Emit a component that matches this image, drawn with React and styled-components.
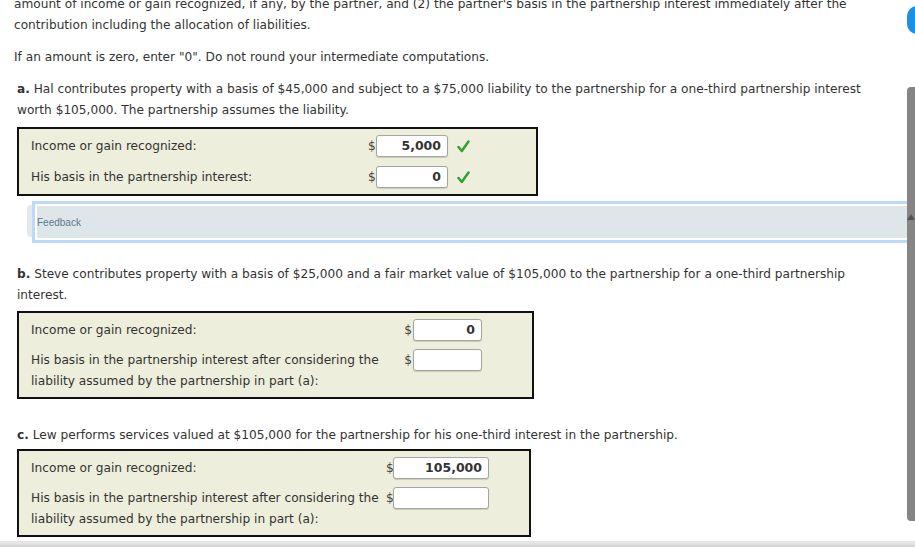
import styled, { createGlobalStyle } from "styled-components";

const GlobalStyle = createGlobalStyle`
  html, body {
    margin: 0;
    padding: 0;
    background: #fff;
    overflow: hidden;
  }
  body {
    font-family: Verdana, "DejaVu Sans", sans-serif;
    font-size: 12.15px;
    color: #333;
  }
`;

const Page = styled.div`
  position: relative;
  width: 915px;
  height: 547px;
  overflow: hidden;
`;

const Content = styled.div`
  padding: 0 20px 0 14px;
  margin-top: -6px;
`;

const Para = styled.p`
  margin: 0 0 11px;
  line-height: 21px;
`;

const Part = styled.div`
  padding-left: 3px;
  margin-top: ${(p) => p.$top || 0}px;
`;

const PartText = styled.p`
  margin: 0;
  line-height: 21px;
  b {
    font-weight: bold;
  }
`;

const AnswerBox = styled.div`
  width: ${(p) => p.$width}px;
  box-sizing: border-box;
  margin-top: ${(p) => p.$mt ?? 6}px;
  padding: 6px 0 ${(p) => p.$bottom || 6}px 12px;
  background: #edeedb;
  border: 2px solid #111;
  display: grid;
  grid-template-columns: ${(p) => p.$cols};
  row-gap: ${(p) => p.$gap || 8}px;
  align-items: start;
`;

const Label = styled.div`
  line-height: 21px;
  padding-top: 1px;
  color: #333;
`;

const Dollar = styled.div`
  line-height: 22px;
  text-align: right;
  color: #444;
  padding-right: 1px;
`;

const Field = styled.div`
  height: 22px;
  box-sizing: border-box;
  background: #fff;
  border: 1px solid #a4a4a4;
  border-radius: 3px;
  box-shadow: 0 1px 1px rgba(0, 0, 0, 0.15);
  text-align: right;
  padding-right: 6px;
  font-weight: bold;
  font-size: 12.5px;
  line-height: 20px;
  color: #333;
`;

const Check = styled.div`
  display: flex;
  align-items: center;
  height: 22px;
  padding-left: 9px;
`;

const FeedbackWrap = styled.div`
  position: relative;
  margin: 5px -20px 0 18px;
  height: 42px;
  box-sizing: border-box;
  border: 3px solid #bcd9f7;
  border-right: none;
  padding: 2px 0 2px 2px;
  &::before {
    content: "";
    position: absolute;
    left: -8px;
    top: 1px;
    width: 5px;
    height: 32px;
    border-radius: 4px 0 0 4px;
    background: #e4e9ec;
  }
`;

const FeedbackInner = styled.div`
  height: 100%;
  background: #dee6ea;
  display: flex;
  align-items: center;
  font-family: "Liberation Sans", Arial, sans-serif;
  font-size: 10px;
  color: #5a7b8b;
`;

const Scrollbar = styled.div`
  position: absolute;
  right: 0;
  top: 87px;
  width: 8px;
  height: 434px;
  background: #858585;
  border-radius: 4px 0 0 4px;
`;

const ScrollArrow = styled.div`
  position: absolute;
  right: 0;
  top: 214px;
  width: 0;
  height: 0;
  border-left: 4px solid transparent;
  border-right: 4px solid transparent;
  border-bottom: 6px solid #555;
`;

const HelpBubble = styled.div`
  position: absolute;
  right: -22px;
  top: 6px;
  width: 30px;
  height: 28px;
  border-radius: 10px;
  background: #1e8fe1;
`;

const BottomBar = styled.div`
  position: absolute;
  left: 0;
  right: 0;
  bottom: 0;
  height: 5px;
  background: linear-gradient(#ececec, #cfcfcf);
  border-top: 1px solid #e2e2e2;
`;

const CheckMark = () => (
  <svg width="13" height="13" viewBox="0 0 13 13">
    <path d="M1.5 7 L4.8 11 L11.5 1.5" fill="none" stroke="#2da337" strokeWidth="2.5" strokeLinecap="round" strokeLinejoin="round" />
  </svg>
);

const Row = ({ label, value, check }) => (
  <>
    <Label>{label}</Label>
    <Dollar>$</Dollar>
    <Field>{value}</Field>
    {check !== undefined && <Check>{check && <CheckMark />}</Check>}
  </>
);

export default function App() {
  return (
    <Page>
      <GlobalStyle />
      <Content>
        <Para>
          amount of income or gain recognized, if any, by the partner, and (2) the partner's basis in the partnership interest immediately after the contribution including the allocation of liabilities.
        </Para>
        <Para>If an amount is zero, enter "0". Do not round your intermediate computations.</Para>

        <Part>
          <PartText>
            <b>a.</b> Hal contributes property with a basis of $45,000 and subject to a $75,000 liability to the partnership for a one-third partnership interest worth $105,000. The partnership assumes the liability.
          </PartText>
          <AnswerBox $width={521} $cols="337px 8px 72px 22px" $gap={9}>
            <Row label="Income or gain recognized:" value="5,000" check />
            <Row label="His basis in the partnership interest:" value="0" check />
          </AnswerBox>
        </Part>

        <FeedbackWrap>
          <FeedbackInner>Feedback</FeedbackInner>
        </FeedbackWrap>

        <Part $top={21}>
          <PartText>
            <b>b.</b> Steve contributes property with a basis of $25,000 and a fair market value of $105,000 to the partnership for a one-third partnership interest.
          </PartText>
          <AnswerBox $width={517} $cols="373px 9px 69px" $bottom={5} $mt={5}>
            <Row label="Income or gain recognized:" value="0" />
            <Row label="His basis in the partnership interest after considering the liability assumed by the partnership in part (a):" value="" />
          </AnswerBox>
        </Part>

        <Part $top={26}>
          <PartText>
            <b>c.</b> Lew performs services valued at $105,000 for the partnership for his one-third interest in the partnership.
          </PartText>
          <AnswerBox $width={514} $cols="355px 7px 96px" $bottom={5} $mt={3}>
            <Row label="Income or gain recognized:" value="105,000" />
            <Row label="His basis in the partnership interest after considering the liability assumed by the partnership in part (a):" value="" />
          </AnswerBox>
        </Part>
      </Content>
      <HelpBubble />
      <Scrollbar />
      <ScrollArrow />
      <BottomBar />
    </Page>
  );
}
